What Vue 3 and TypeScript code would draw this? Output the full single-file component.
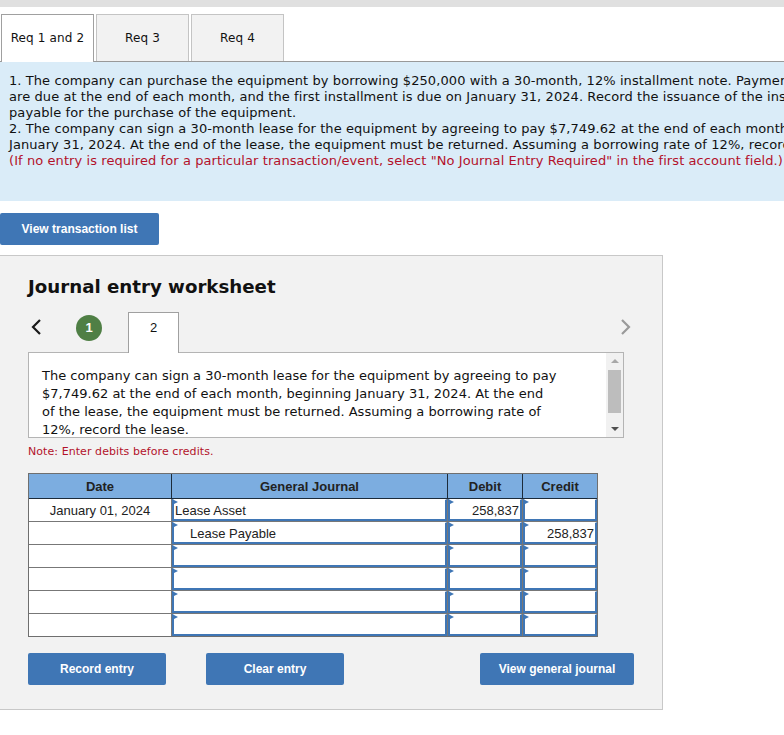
<template>
  <div class="page">
    <div class="top-bar"></div>

    <div class="tabs">
      <div v-for="(tab, i) in tabs" :key="tab" class="tab" :class="{ 'tab--active': i === 0 }">{{ tab }}</div>
    </div>

    <div class="info">
      <div v-for="line in infoLines" :key="line" class="info__line">{{ line }}</div>
      <div class="info__line info__line--red">
        (If no entry is required for a particular transaction/event, select "No Journal Entry Required" in the first account field.)
      </div>
    </div>

    <button class="btn btn--list" type="button">View transaction list</button>

    <section class="sheet">
      <h2 class="sheet__title">Journal entry worksheet</h2>

      <div class="steps">
        <svg class="arrow" viewBox="0 0 12 18" width="12" height="18">
          <path d="M10 2 L3 9 L10 16" fill="none" stroke="#1a1a1a" stroke-width="2.2" />
        </svg>
        <span class="step-done">1</span>
        <span class="step-current">2</span>
        <svg class="arrow arrow--next" viewBox="0 0 12 18" width="12" height="18">
          <path d="M2 2 L9 9 L2 16" fill="none" stroke="#9a9a9a" stroke-width="2.2" />
        </svg>
      </div>

      <div class="desc">
        <p class="desc__text">
          The company can sign a 30-month lease for the equipment by agreeing to pay<br />
          $7,749.62 at the end of each month, beginning January 31, 2024. At the end<br />
          of the lease, the equipment must be returned. Assuming a borrowing rate of<br />
          12%, record the lease.
        </p>
        <div class="scroll">
          <span class="scroll__up"></span>
          <span class="scroll__thumb"></span>
          <span class="scroll__down"></span>
        </div>
      </div>

      <p class="note">Note: Enter debits before credits.</p>

      <table class="journal">
        <colgroup>
          <col class="col-date" />
          <col class="col-account" />
          <col class="col-debit" />
          <col class="col-credit" />
        </colgroup>
        <thead>
          <tr>
            <th>Date</th>
            <th>General Journal</th>
            <th>Debit</th>
            <th>Credit</th>
          </tr>
        </thead>
        <tbody>
          <tr v-for="(row, i) in rows" :key="i">
            <td class="date-cell">{{ row.date }}</td>
            <td class="input-cell">
              <div class="input" :class="{ 'input--indent': row.indent }">{{ row.account }}</div>
            </td>
            <td class="input-cell">
              <div class="input input--num">{{ row.debit }}</div>
            </td>
            <td class="input-cell">
              <div class="input input--num">{{ row.credit }}</div>
            </td>
          </tr>
        </tbody>
      </table>

      <div class="actions">
        <button class="btn btn--action" type="button">Record entry</button>
        <button class="btn btn--action btn--clear" type="button">Clear entry</button>
        <button class="btn btn--journal" type="button">View general journal</button>
      </div>
    </section>
  </div>
</template>

<script setup lang="ts">
type Row = {
  date: string;
  account: string;
  indent: boolean;
  debit: string;
  credit: string;
};

const tabs = ["Req 1 and 2", "Req 3", "Req 4"];

const infoLines = [
  "1. The company can purchase the equipment by borrowing $250,000 with a 30-month, 12% installment note. Payments",
  "are due at the end of each month, and the first installment is due on January 31, 2024. Record the issuance of the installment note",
  "payable for the purchase of the equipment.",
  "2. The company can sign a 30-month lease for the equipment by agreeing to pay $7,749.62 at the end of each month, beginning",
  "January 31, 2024. At the end of the lease, the equipment must be returned. Assuming a borrowing rate of 12%, record the lease.",
];

const rows: Row[] = [
  { date: "January 01, 2024", account: "Lease Asset", indent: false, debit: "258,837", credit: "" },
  { date: "", account: "Lease Payable", indent: true, debit: "", credit: "258,837" },
  { date: "", account: "", indent: false, debit: "", credit: "" },
  { date: "", account: "", indent: false, debit: "", credit: "" },
  { date: "", account: "", indent: false, debit: "", credit: "" },
  { date: "", account: "", indent: false, debit: "", credit: "" },
];
</script>

<style>
html,
body {
  margin: 0;
  background: #fff;
  overflow: hidden;
}
</style>

<style scoped>
.page {
  width: 784px;
  height: 735px;
  overflow: hidden;
  font-family: "DejaVu Sans", Verdana, sans-serif;
  color: #111;
}

.top-bar {
  height: 7px;
  background: #e0e0e0;
}

.tabs {
  display: flex;
  gap: 2px;
  height: 48px;
  margin-top: 7px;
  padding-left: 1px;
}

.tab {
  width: 93px;
  height: 47px;
  box-sizing: border-box;
  border: 1px solid #c4c4c4;
  border-bottom: 0;
  background: #f2f2f2;
  font-size: 12px;
  letter-spacing: 0.15px;
  line-height: 46px;
  text-align: center;
}

.tab--active {
  height: 48px;
  border-color: #a0a0a0;
  background: #fff;
  position: relative;
  z-index: 1;
}

.info {
  height: 140px;
  box-sizing: border-box;
  margin-top: -1px;
  border-top: 1px solid #999;
  background: #daecf8;
  padding: 11px 0 0 9px;
  font-size: 13px;
  letter-spacing: 0.08px;
  line-height: 16px;
}

.info__line {
  white-space: nowrap;
}

.info__line--red {
  color: #b3122b;
}

.btn {
  display: block;
  border: 0;
  border-radius: 2px;
  background: #3f76b5;
  color: #fff;
  font-family: "Liberation Sans", Arial, sans-serif;
  font-size: 12px;
  font-weight: 700;
  text-align: center;
  padding: 0;
}

.btn--list {
  width: 159px;
  height: 32px;
  margin-top: 12px;
}

.sheet {
  width: 663px;
  height: 455px;
  box-sizing: border-box;
  margin-top: 10px;
  border: 1px solid #c8c8c8;
  border-left: 0;
  background: #f2f2f2;
  padding: 0 0 0 28px;
}

.sheet__title {
  margin: 20px 0 0;
  font-size: 18.2px;
  line-height: 22px;
  font-weight: 700;
  color: #111;
}

.steps {
  display: flex;
  align-items: flex-start;
  position: relative;
  height: 41px;
  margin-top: 14px;
}

.arrow {
  margin-top: 6px;
  margin-left: 2px;
}

.arrow--next {
  margin-left: auto;
  margin-right: 30px;
}

.step-done {
  width: 26px;
  height: 26px;
  margin: 3px 0 0 34px;
  border-radius: 50%;
  background: #4f7f45;
  color: #fff;
  font-family: "Liberation Sans", Arial, sans-serif;
  font-size: 13px;
  font-weight: 700;
  line-height: 26px;
  text-align: center;
}

.step-current {
  position: relative;
  z-index: 1;
  width: 51px;
  height: 41px;
  box-sizing: border-box;
  margin-left: 26px;
  border: 1px solid #a0a0a0;
  border-bottom: 0;
  background: #fff;
  font-family: "Liberation Sans", Arial, sans-serif;
  font-size: 13px;
  line-height: 30px;
  text-align: center;
}

.desc {
  display: flex;
  justify-content: space-between;
  width: 596px;
  height: 86px;
  box-sizing: border-box;
  margin-top: -1px;
  border: 1px solid #b4b4b4;
  background: #fff;
  overflow: hidden;
}

.desc__text {
  margin: 14px 0 0 13px;
  font-size: 13px;
  letter-spacing: 0.01px;
  line-height: 18px;
  white-space: nowrap;
}

.scroll {
  position: relative;
  width: 17px;
  background: #f1f1f1;
  flex: none;
}

.scroll__thumb {
  position: absolute;
  top: 17px;
  left: 2px;
  width: 13px;
  height: 43px;
  background: #bdbdbd;
}

.scroll__up,
.scroll__down {
  position: absolute;
  left: 5px;
  width: 0;
  height: 0;
  border-left: 4px solid transparent;
  border-right: 4px solid transparent;
}

.scroll__up {
  top: 6px;
  border-bottom: 4px solid #a8a8a8;
}

.scroll__down {
  bottom: 6px;
  border-top: 4px solid #505050;
}

.note {
  margin: 7px 0 0 0;
  font-size: 11px;
  letter-spacing: 0.07px;
  line-height: 14px;
  color: #b3122b;
}

.journal {
  width: 570px;
  height: 164px;
  box-sizing: border-box;
  margin-top: 14px;
  border-collapse: separate;
  border-spacing: 0;
  table-layout: fixed;
  border: 1px solid #6f6f6f;
  font-family: "Liberation Sans", Arial, sans-serif;
  font-size: 13px;
  color: #222;
  background: #fff;
}

.col-date {
  width: 143px;
}

.col-account {
  width: 276px;
}

.col-debit {
  width: 75px;
}

.col-credit {
  width: 74px;
}

.journal th {
  height: 25px;
  box-sizing: border-box;
  padding: 0;
  background: #7cade0;
  border-right: 1px solid #1c2b3a;
  border-bottom: 1px solid #1c2b3a;
  font-size: 13px;
  font-weight: 700;
  color: #222;
}

.journal th:last-child,
.journal td:last-child {
  border-right: 0;
}

.journal td {
  height: 23px;
  box-sizing: border-box;
  padding: 0;
  border-right: 1px solid #777;
  border-bottom: 1px solid #777;
}

.journal tr:last-child td {
  height: 22px;
  border-bottom: 0;
}

.date-cell {
  text-align: center;
}

.input {
  position: relative;
  height: 22px;
  box-sizing: border-box;
  border: 2px solid #3f76b5;
  border-top-width: 1px;
  border-top-color: #fff;
  padding-left: 1px;
  padding-top: 1px;
  line-height: 19px;
  white-space: nowrap;
}

.input::before {
  content: "";
  position: absolute;
  top: -1px;
  left: -2px;
  width: 0;
  height: 0;
  border-top: 3px solid transparent;
  border-bottom: 3px solid transparent;
  border-left: 6px solid #3f76b5;
}

.input--indent {
  padding-left: 16px;
}

.input--num {
  padding-left: 0;
  padding-right: 1px;
  text-align: right;
}

.actions {
  display: flex;
  width: 606px;
  margin-top: 16px;
}

.btn--action {
  width: 138px;
  height: 32px;
}

.btn--clear {
  margin-left: 40px;
}

.btn--journal {
  width: 154px;
  height: 32px;
  margin-left: auto;
}
</style>
